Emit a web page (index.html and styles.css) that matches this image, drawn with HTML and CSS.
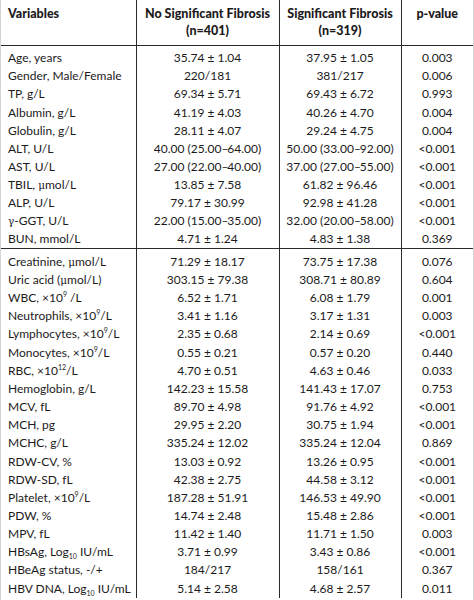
FILE: index.html
```html
<!DOCTYPE html>
<html lang="en">
  <head>
    <meta charset="UTF-8" />
    <title>Baseline characteristics</title>
    <link rel="stylesheet" href="styles.css">
  </head>
  <body>
    <div class="frame">
      <table class="stats">
        <colgroup>
          <col class="col-var" />
          <col class="col-no" />
          <col class="col-sig" />
          <col class="col-p" />
        </colgroup>
        <thead>
          <tr>
            <th class="name">Variables</th>
            <th>No Significant Fibrosis<br />(n=401)</th>
            <th>Significant Fibrosis<br />(n=319)</th>
            <th>p-value</th>
          </tr>
        </thead>
        <tbody>
          <tr class="first"><td class="name">Age, years</td><td>35.74 ± 1.04</td><td>37.95 ± 1.05</td><td>0.003</td></tr>
          <tr><td class="name">Gender, Male/Female</td><td>220/181</td><td>381/217</td><td>0.006</td></tr>
          <tr><td class="name">TP, g/L</td><td>69.34 ± 5.71</td><td>69.43 ± 6.72</td><td>0.993</td></tr>
          <tr><td class="name">Albumin, g/L</td><td>41.19 ± 4.03</td><td>40.26 ± 4.70</td><td>0.004</td></tr>
          <tr><td class="name">Globulin, g/L</td><td>28.11 ± 4.07</td><td>29.24 ± 4.75</td><td>0.004</td></tr>
          <tr><td class="name">ALT, U/L</td><td>40.00 (25.00<span class="dash">–</span>64.00)</td><td>50.00 (33.00<span class="dash">–</span>92.00)</td><td>&lt;0.001</td></tr>
          <tr><td class="name">AST, U/L</td><td>27.00 (22.00<span class="dash">–</span>40.00)</td><td>37.00 (27.00<span class="dash">–</span>55.00)</td><td>&lt;0.001</td></tr>
          <tr><td class="name">TBIL, <span class="mu">μ</span>mol/L</td><td>13.85 ± 7.58</td><td>61.82 ± 96.46</td><td>&lt;0.001</td></tr>
          <tr><td class="name">ALP, U/L</td><td>79.17 ± 30.99</td><td>92.98 ± 41.28</td><td>&lt;0.001</td></tr>
          <tr><td class="name"><span class="mu">γ</span>-GGT, U/L</td><td>22.00 (15.00<span class="dash">–</span>35.00)</td><td>32.00 (20.00<span class="dash">–</span>58.00)</td><td>&lt;0.001</td></tr>
          <tr><td class="name">BUN, mmol/L</td><td>4.71 ± 1.24</td><td>4.83 ± 1.38</td><td>0.369</td></tr>
        </tbody>
        <tbody>
          <tr class="first"><td class="name">Creatinine, <span class="mu">μ</span>mol/L</td><td>71.29 ± 18.17</td><td>73.75 ± 17.38</td><td>0.076</td></tr>
          <tr><td class="name">Uric acid (<span class="mu">μ</span>mol/L)</td><td>303.15 ± 79.38</td><td>308.71 ± 80.89</td><td>0.604</td></tr>
          <tr><td class="name">WBC, ×10<sup>9</sup> /L</td><td>6.52 ± 1.71</td><td>6.08 ± 1.79</td><td>0.001</td></tr>
          <tr><td class="name">Neutrophils, ×10<sup>9</sup>/L</td><td>3.41 ± 1.16</td><td>3.17 ± 1.31</td><td>0.003</td></tr>
          <tr><td class="name">Lymphocytes, ×10<sup>9</sup>/L</td><td>2.35 ± 0.68</td><td>2.14 ± 0.69</td><td>&lt;0.001</td></tr>
          <tr><td class="name">Monocytes, ×10<sup>9</sup>/L</td><td>0.55 ± 0.21</td><td>0.57 ± 0.20</td><td>0.440</td></tr>
          <tr><td class="name">RBC, ×10<sup>12</sup>/L</td><td>4.70 ± 0.51</td><td>4.63 ± 0.46</td><td>0.033</td></tr>
          <tr><td class="name">Hemoglobin, g/L</td><td>142.23 ± 15.58</td><td>141.43 ± 17.07</td><td>0.753</td></tr>
          <tr><td class="name">MCV, fL</td><td>89.70 ± 4.98</td><td>91.76 ± 4.92</td><td>&lt;0.001</td></tr>
          <tr><td class="name">MCH, pg</td><td>29.95 ± 2.20</td><td>30.75 ± 1.94</td><td>&lt;0.001</td></tr>
          <tr><td class="name">MCHC, g/L</td><td>335.24 ± 12.02</td><td>335.24 ± 12.04</td><td>0.869</td></tr>
          <tr><td class="name">RDW-CV, %</td><td>13.03 ± 0.92</td><td>13.26 ± 0.95</td><td>&lt;0.001</td></tr>
          <tr><td class="name">RDW-SD, fL</td><td>42.38 ± 2.75</td><td>44.58 ± 3.12</td><td>&lt;0.001</td></tr>
          <tr><td class="name">Platelet, ×10<sup>9</sup>/L</td><td>187.28 ± 51.91</td><td>146.53 ± 49.90</td><td>&lt;0.001</td></tr>
          <tr><td class="name">PDW, %</td><td>14.74 ± 2.48</td><td>15.48 ± 2.86</td><td>&lt;0.001</td></tr>
          <tr><td class="name">MPV, fL</td><td>11.42 ± 1.40</td><td>11.71 ± 1.50</td><td>0.003</td></tr>
          <tr><td class="name">HBsAg, Log<sub>10</sub> IU/mL</td><td>3.71 ± 0.99</td><td>3.43 ± 0.86</td><td>&lt;0.001</td></tr>
          <tr><td class="name">HBeAg status, -/+</td><td>184/217</td><td>158/161</td><td>0.367</td></tr>
          <tr><td class="name">HBV DNA, Log<sub>10</sub> IU/mL</td><td>5.14 ± 2.58</td><td>4.68 ± 2.57</td><td>0.011</td></tr>
        </tbody>
      </table>
    </div>
  </body>
</html>
```

FILE: styles.css
```css
* {
  margin: 0;
  padding: 0;
  box-sizing: border-box;
}

body {
  font-family: Lato, "Open Sans", sans-serif;
  font-size: 12px;
  color: #1c1a1b;
  background: #fff;
}

.frame {
  width: 474px;
  height: 600px;
  overflow: hidden;
  border-left: 1px solid #d4d4d4;
  border-right: 1px solid #d4d4d4;
}

.stats {
  width: 100%;
  border-collapse: collapse;
  table-layout: fixed;
}

.col-var {
  width: 135px;
}

.col-no {
  width: 143px;
}

.col-sig {
  width: 122px;
}

.stats th,
.stats td {
  text-align: center;
  white-space: nowrap;
  border-left: 1px solid #2b2b2b;
}

.stats th:first-child,
.stats td:first-child {
  border-left: none;
}

.stats th {
  height: 45px;
  vertical-align: top;
  padding-top: 5px;
  font-size: 12.5px;
  font-weight: 900;
  line-height: 17px;
  border-bottom: 1px solid #2b2b2b;
}

.stats td {
  height: 18.17px;
  line-height: 14px;
  vertical-align: middle;
}

.stats tbody + tbody tr:first-child td {
  border-top: 1px solid #2b2b2b;
}

.stats tr.first td {
  height: 22.17px;
  padding-top: 4px;
}

.stats .name {
  text-align: left;
  padding-left: 7px;
}

.mu {
  font-family: "DejaVu Serif", serif;
  font-size: 10.5px;
  line-height: 1;
}

.dash {
  letter-spacing: -1px;
}

sup,
sub {
  font-size: 7px;
  line-height: 0;
}
```
